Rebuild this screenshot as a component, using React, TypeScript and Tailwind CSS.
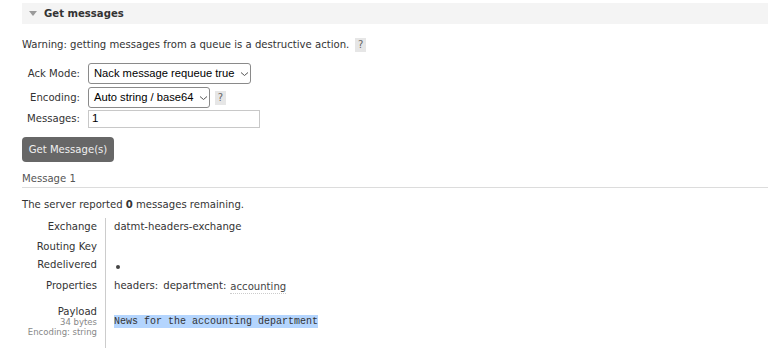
import React from "react";

const verdana = { fontFamily: "'DejaVu Sans', Verdana, sans-serif" };
const arial = { fontFamily: "'Liberation Sans', Arial, sans-serif" };

function Chevron() {
  return (
    <svg width="9" height="6" viewBox="0 0 9 6" className="ml-[5px] shrink-0">
      <path d="M1 1.5 L4.5 4.5 L8 1.5" fill="none" stroke="#555" strokeWidth="1" />
    </svg>
  );
}

function Help() {
  return (
    <span className="inline-flex h-[14px] w-[11px] items-center justify-center bg-[#e6e6e6] text-[10px] leading-none text-[#666]">?</span>
  );
}

export default function App() {
  return (
    <div className="h-[348px] w-[768px] overflow-hidden bg-white text-[10.1px] text-[#333]" style={verdana}>
      <div className="pl-[22px] pt-[3px]">
        <div className="flex h-[21px] items-center bg-[#f4f4f4] pl-[7px]">
          <svg width="8" height="6" viewBox="0 0 8 6" className="mt-[1px]">
            <path d="M0 0 L8 0 L4 5 Z" fill="#9a9a9a" />
          </svg>
          <span className="ml-[7px] mt-[1px] font-bold leading-[14px] text-[#333]">Get messages</span>
        </div>

        <div className="mt-[14px] flex h-[14px] items-center">
          <span className="leading-[14px]">Warning: getting messages from a queue is a destructive action.</span>
          <span className="ml-[6px]"><Help /></span>
        </div>

        <div className="mt-[11px] flex flex-col">
          <div className="flex h-[21px] items-center">
            <span className="w-[58px] shrink-0 whitespace-nowrap text-right leading-[14px]">Ack Mode:</span>
            <div className="ml-[8px] flex h-[21px] w-[163px] shrink-0 items-center justify-between whitespace-nowrap rounded-[3px] border border-[#8a8a8a] bg-white pl-[5px] pr-[4px] text-[11.2px] text-black" style={arial}>
              <span>Nack message requeue true</span>
              <Chevron />
            </div>
          </div>
          <div className="mt-[3px] flex h-[21px] items-center">
            <span className="w-[58px] shrink-0 whitespace-nowrap text-right leading-[14px]">Encoding:</span>
            <div className="ml-[8px] flex h-[21px] w-[122px] shrink-0 items-center justify-between whitespace-nowrap rounded-[3px] border border-[#8a8a8a] bg-white pl-[5px] pr-[5px] text-[11.2px] text-black" style={arial}>
              <span>Auto string / base64</span>
              <Chevron />
            </div>
            <span className="ml-[5px]"><Help /></span>
          </div>
          <div className="mt-[2px] flex h-[18px] items-center">
            <span className="w-[58px] shrink-0 whitespace-nowrap text-right leading-[14px]">Messages:</span>
            <div className="ml-[8px] flex h-[18px] w-[172px] shrink-0 items-center border border-[#c8c8c8] bg-white pl-[3px] text-[11.5px] text-black" style={arial}>
              1
            </div>
          </div>
        </div>

        <button className="mt-[9px] flex h-[25px] w-[92px] items-center justify-center rounded-[4px] bg-[#676767] leading-[14px] text-[#f0f0f0]">
          Get Message(s)
        </button>

        <div className="mt-[10px] border-b border-[#dcdcdc] pb-[2px] leading-[13px] text-[#555]">Message 1</div>

        <div className="mt-[10px] leading-[13px]">
          The server reported <b>0</b> messages remaining.
        </div>

        <div className="mt-[7px] flex">
          <div className="flex w-[75px] flex-col items-end pt-[2px]">
            <div className="h-[20px] leading-[13px]">Exchange</div>
            <div className="h-[18px] leading-[13px]">Routing Key</div>
            <div className="h-[21px] leading-[13px]">Redelivered</div>
            <div className="h-[27px] leading-[13px]">Properties</div>
            <div className="leading-[12px]">Payload</div>
            <div className="text-[8.5px] leading-[9px] text-[#888]">34 bytes</div>
            <div className="text-[8.5px] leading-[10px] text-[#888]">Encoding: string</div>
          </div>
          <div className="ml-[8px] h-[130px] border-l border-[#ccc] pl-[8px] pt-[2px]">
            <div className="h-[20px] leading-[13px]">datmt-headers-exchange</div>
            <div className="h-[18px]"></div>
            <div className="flex h-[21px] items-start pl-[2px] pt-[7px]">
              <span className="inline-block h-[4px] w-[4px] rounded-full bg-[#444]"></span>
            </div>
            <div className="flex h-[27px] items-start leading-[13px]">
              <span>headers:</span>
              <span className="ml-[5px]">department:</span>
              <span className="ml-[4px] mt-[1px] border-b border-dotted border-[#ccc] text-[#444]">accounting</span>
            </div>
            <div className="mt-[8px] leading-[13px]">
              <span className="bg-[#b4d5fe] py-[1px] text-[10px] text-[#333]" style={{ fontFamily: "'Liberation Mono', 'Courier New', monospace" }}>
                News for the accounting department
              </span>
            </div>
          </div>
        </div>
      </div>
    </div>
  );
}
